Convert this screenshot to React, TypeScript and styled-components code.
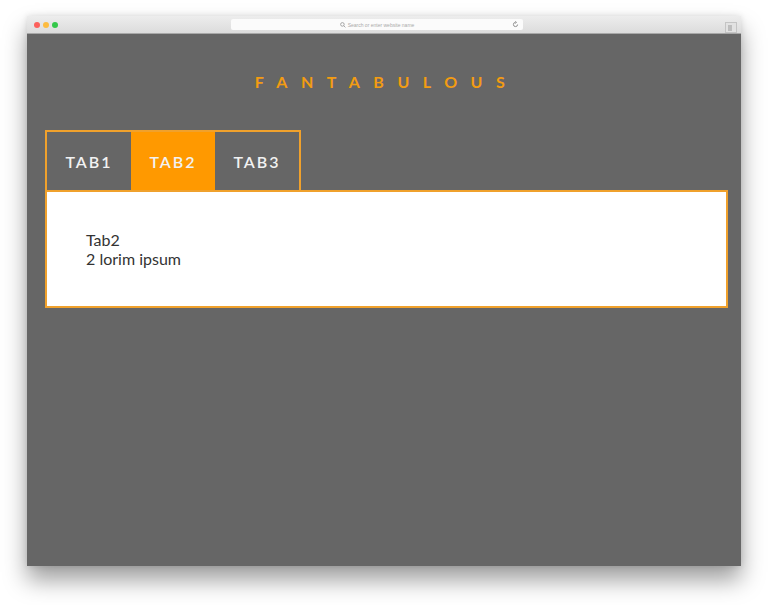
import React, { useState } from 'react'
import styled, { createGlobalStyle } from 'styled-components'

const GlobalStyle = createGlobalStyle`
  html, body {
    margin: 0;
    padding: 0;
    background: #ffffff;
  }
  body {
    font-family: Lato, "Open Sans", sans-serif;
  }
`

const tabs = [
  { id: 1, label: 'TAB1', text: '1 lorim ipsum' },
  { id: 2, label: 'TAB2', text: '2 lorim ipsum' },
  { id: 3, label: 'TAB3', text: '3 lorim ipsum' },
]

const App: React.FC = () => {
  const [active, setActive] = useState(2)
  const current = tabs.find(t => t.id === active)!

  return (
    <>
      <GlobalStyle />
      <Stage>
        <Window>
          <Chrome>
            <Lights>
              <Light color="#fc605c" />
              <Light color="#fdbc40" />
              <Light color="#34c84a" />
            </Lights>
            <Address>
              <svg width="6" height="6" viewBox="0 0 10 10">
                <circle cx="4" cy="4" r="3" fill="none" stroke="#999" strokeWidth="1.4" />
                <path d="M6.2 6.2 L9 9" stroke="#999" strokeWidth="1.4" />
              </svg>
              <span>Search or enter website name</span>
              <Reload>
                <svg width="7" height="7" viewBox="0 0 10 10">
                  <path d="M8 5 A3 3 0 1 1 5 2" fill="none" stroke="#888" strokeWidth="1.3" />
                  <path d="M4.5 0.5 L6.5 2 L4.5 3.5" fill="none" stroke="#888" strokeWidth="1.2" />
                </svg>
              </Reload>
            </Address>
            <CornerButton>
              <svg width="6" height="8" viewBox="0 0 6 8">
                <path d="M1 1 V7 M3 1 V7" stroke="#999" strokeWidth="1" />
              </svg>
            </CornerButton>
          </Chrome>

          <Page>
            <Title>FANTABULOUS</Title>
            <TabBar>
              {tabs.map(t => (
                <Tab key={t.id} active={t.id === active} onClick={() => setActive(t.id)}>
                  {t.label}
                </Tab>
              ))}
            </TabBar>
            <Panel>
              <PanelText>
                Tab{current.id}
                <br />
                {current.text}
              </PanelText>
            </Panel>
          </Page>
        </Window>
      </Stage>
    </>
  )
}

export default App

const Stage = styled.div`
  width: 768px;
  height: 605px;
  padding: 16px 27px 0 27px;
  box-sizing: border-box;
`

const Window = styled.div`
  width: 714px;
  height: 550px;
  display: flex;
  flex-direction: column;
  box-shadow: 0 14px 22px rgba(0, 0, 0, 0.38), 0 0 6px rgba(0, 0, 0, 0.12);
`

const Chrome = styled.div`
  height: 17px;
  display: flex;
  align-items: center;
  padding: 0 4px 0 7px;
  background: linear-gradient(#ededed, #dcdcdc);
  border-bottom: 1px solid #a8a8a8;
`

const Lights = styled.div`
  display: flex;
  gap: 3px;
  width: 197px;
  margin-top: 1px;
`

const Light = styled.span<{ color: string }>`
  width: 6px;
  height: 6px;
  border-radius: 50%;
  background: ${p => p.color};
`

const Address = styled.div`
  width: 292px;
  height: 11px;
  background: #fbfbfb;
  border-radius: 2px;
  display: flex;
  align-items: center;
  justify-content: center;
  gap: 2px;
  position: relative;
  font-family: "Liberation Sans", sans-serif;
  font-size: 5px;
  color: #aaa;
`

const Reload = styled.span`
  position: absolute;
  right: 4px;
  top: 2px;
  display: flex;
`

const CornerButton = styled.div`
  margin-left: auto;
  width: 10px;
  height: 9px;
  margin-top: 6px;
  background: #e2e2e2;
  border: 1px solid #c4c4c4;
  display: flex;
  align-items: center;
  justify-content: center;
`

const Page = styled.div`
  flex: 1;
  background: #666666;
  padding: 37px 13px 0 18px;
  display: flex;
  flex-direction: column;
`

const Title = styled.h1`
  margin: 0 0 37px 0;
  text-align: center;
  font-size: 16px;
  line-height: 22px;
  font-weight: 700;
  letter-spacing: 13.5px;
  color: #f39c12;
`

const TabBar = styled.div`
  display: flex;
  align-self: flex-start;
  border: 2px solid #f0a12c;
  border-bottom: none;
`

const Tab = styled.div<{ active: boolean }>`
  width: 84px;
  height: 58px;
  display: flex;
  align-items: center;
  justify-content: center;
  font-size: 16px;
  font-weight: 600;
  letter-spacing: 2px;
  color: #f2f2f2;
  cursor: pointer;
  background: ${p => (p.active ? '#ff9900' : 'transparent')};
`

const Panel = styled.div`
  height: 118px;
  box-sizing: border-box;
  background: #ffffff;
  border: 2px solid #f0a12c;
  padding: 38px 0 0 39px;
`

const PanelText = styled.div`
  font-size: 16px;
  line-height: 19px;
  color: #333333;
`
